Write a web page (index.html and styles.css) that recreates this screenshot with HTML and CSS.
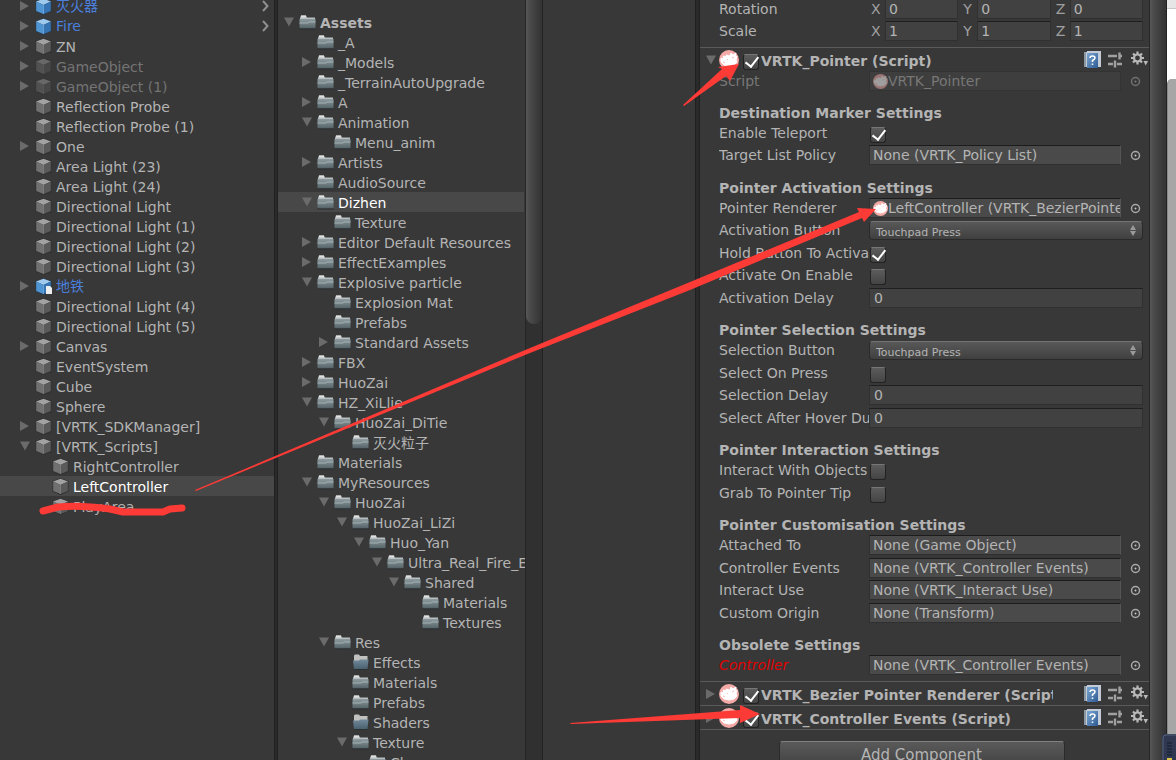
FILE: index.html
```html
<!DOCTYPE html>
<html lang="en">
<head>
  <meta charset="UTF-8">
  <title>Scene editor</title>
  <link rel="stylesheet" href="styles.css">
</head>
<body>
  <!-- shared icons -->
  <svg class="sprite" aria-hidden="true">
    <defs>
      <linearGradient id="folderFill" x1="0" y1="0" x2="0" y2="1">
        <stop offset="0" stop-color="#8f9c9f"/><stop offset="1" stop-color="#536267"/>
      </linearGradient>
      <linearGradient id="openFill" x1="0" y1="0" x2="0" y2="1">
        <stop offset="0" stop-color="#71899a"/><stop offset="1" stop-color="#4a6170"/>
      </linearGradient>
      <linearGradient id="bookFill" x1="0" y1="0" x2="1" y2="1">
        <stop offset="0" stop-color="#7ba6d2"/><stop offset="1" stop-color="#2d5a94"/>
      </linearGradient>
    </defs>
    <symbol id="right" viewBox="0 0 10 10"><path d="M0 0L9 5L0 10Z" fill="#6b6b6b"/></symbol>
    <symbol id="down" viewBox="0 0 10 10"><path d="M0 0.500H10L5 9.500Z" fill="#6b6b6b"/></symbol>
    <symbol id="cube" viewBox="0 0 17 17">
      <path d="M8.500 0L16.500 3V13.500L8.500 17L0.500 13.500V3Z" fill="#303030"/>
      <path d="M8.500 0.800L16 3.500L8.500 7L1 3.500Z" fill="#a2a2a2"/>
      <path d="M1.200 3.500L8.500 7V16L1.200 13Z" fill="#707070"/>
      <path d="M15.800 3.500L8.500 7V16L15.800 13Z" fill="#5a5a5a"/>
      <path d="M8.500 7V16" stroke="#858585" stroke-width="0.800"/>
    </symbol>
    <symbol id="prefab" viewBox="0 0 17 17">
      <path d="M8.500 0L16.500 3V13.500L8.500 17L0.500 13.500V3Z" fill="#2b3a49"/>
      <path d="M8.500 0.800L16 3.500L8.500 7L1 3.500Z" fill="#9fcaee"/>
      <path d="M1.200 3.500L8.500 7V16L1.200 13Z" fill="#5095d3"/>
      <path d="M15.800 3.500L8.500 7V16L15.800 13Z" fill="#3573b3"/>
      <path d="M8.500 7V16" stroke="#74b0e2" stroke-width="0.800"/>
    </symbol>
    <symbol id="model" viewBox="0 0 17 17">
      <use href="#prefab"/>
      <path d="M11 8H15L17 10V16H11Z" fill="#eee"/>
    </symbol>
    <symbol id="folder" viewBox="0 0 17 16">
      <path d="M1 3.500L2 1H7L8 3H16V5H1Z" fill="#b9bfc0"/>
      <path d="M2 1H7V3H2Z" fill="#e0e0e0"/>
      <path d="M0.500 4.500H16.500V14H0.500Z" fill="url(#folderFill)"/>
      <path d="M0.500 8.500H9L10 7.500H16.500" stroke="#a4b2b4" fill="none"/>
      <path d="M0 14.500H17" stroke="#2a2f30"/>
    </symbol>
    <symbol id="open" viewBox="0 0 17 16">
      <path d="M2 1L3 0H7L8 1.500H15.500V8H2Z" fill="#c1c1bf"/>
      <path d="M1 6H7L8 5H16.500L15.500 14.500H2Z" fill="url(#openFill)"/>
      <path d="M2 15H15.500" stroke="#2a2f30"/>
    </symbol>
    <symbol id="script" viewBox="0 0 20 20">
      <circle cx="10" cy="10" r="10" fill="#f3aaa7"/>
      <path d="M2 8L5 9L4 6L8 7L7 5L11 6L12 3L14 5L17 3L16 7L18 6L17 10L18 12L15 15L10 16L5 15L2 12Z" fill="#fff" stroke="#fff" stroke-linejoin="round"/>
      <path d="M4 12L6 13M13 8L15 7M8 9L9 10" stroke="#f5bdbb" fill="none"/>
    </symbol>
    <symbol id="book" viewBox="0 0 17 17">
      <path d="M0 1H3V16H0Z" fill="#c5ccd3"/>
      <path d="M1 1V16" stroke="#556577"/>
      <path d="M3 0H17V16H3Z" fill="#c3ccd6"/>
      <path d="M3 2H14V17H3Z" fill="url(#bookFill)"/>
      <path d="M6 7Q6 5 8.500 5T11 7Q11 8 8.500 9.500V11M8.500 12.500V14" stroke="#fff" stroke-width="1.500" fill="none"/>
    </symbol>
    <symbol id="sliders" viewBox="0 0 14 16">
      <path d="M0 4H9M0 12H5M9 12H14M11.500 0.500V7.500M7 8.500V15.500M11 4H14" stroke="#a0a0a0" stroke-width="2.400" fill="none"/>
    </symbol>
    <symbol id="gear" viewBox="0 0 17 17">
      <circle cx="6.500" cy="7" r="3.500" stroke="#b9b9b9" stroke-width="2.200" fill="none"/>
      <path d="M6.500 0.500V3M6.500 11V13.500M0 7H2.500M10.500 7H13M2 2.500L4 4.500M9 9.500L11 11.500M11 2.500L9 4.500M4 9.500L2 11.500" stroke="#b9b9b9" stroke-width="2.200"/>
      <path d="M12.500 10H17L14.700 14.500Z" fill="#b9b9b9"/>
    </symbol>
    <symbol id="target" viewBox="0 0 11 11">
      <circle cx="5.500" cy="5.500" r="4" stroke="#a8a8a8" stroke-width="1.500" fill="none"/>
      <circle cx="5.500" cy="5.500" r="1" fill="#c4c4c4"/>
    </symbol>
  </svg>

  <main class="editor">
    <section class="panel hierarchy">
      <ul class="tree">
        <li class="item prefab"><i><svg><use href="#right"/></svg></i><svg class="icon"><use href="#prefab"/></svg><span>灭火器</span><svg class="enter" viewBox="0 0 7 12"><path d="M1 1L5.500 6L1 11"/></svg></li>
        <li class="item prefab"><i><svg><use href="#right"/></svg></i><svg class="icon"><use href="#prefab"/></svg><span>Fire</span><svg class="enter" viewBox="0 0 7 12"><path d="M1 1L5.500 6L1 11"/></svg></li>
        <li class="item"><i><svg><use href="#right"/></svg></i><svg class="icon"><use href="#cube"/></svg><span>ZN</span></li>
        <li class="item inactive"><i><svg><use href="#right"/></svg></i><svg class="icon"><use href="#cube"/></svg><span>GameObject</span></li>
        <li class="item inactive"><i><svg><use href="#right"/></svg></i><svg class="icon"><use href="#cube"/></svg><span>GameObject (1)</span></li>
        <li class="item"><i></i><svg class="icon"><use href="#cube"/></svg><span>Reflection Probe</span></li>
        <li class="item"><i></i><svg class="icon"><use href="#cube"/></svg><span>Reflection Probe (1)</span></li>
        <li class="item"><i><svg><use href="#right"/></svg></i><svg class="icon"><use href="#cube"/></svg><span>One</span></li>
        <li class="item"><i></i><svg class="icon"><use href="#cube"/></svg><span>Area Light (23)</span></li>
        <li class="item"><i></i><svg class="icon"><use href="#cube"/></svg><span>Area Light (24)</span></li>
        <li class="item"><i></i><svg class="icon"><use href="#cube"/></svg><span>Directional Light</span></li>
        <li class="item"><i></i><svg class="icon"><use href="#cube"/></svg><span>Directional Light (1)</span></li>
        <li class="item"><i></i><svg class="icon"><use href="#cube"/></svg><span>Directional Light (2)</span></li>
        <li class="item"><i></i><svg class="icon"><use href="#cube"/></svg><span>Directional Light (3)</span></li>
        <li class="item prefab"><i><svg><use href="#right"/></svg></i><svg class="icon"><use href="#model"/></svg><span>地铁</span></li>
        <li class="item"><i></i><svg class="icon"><use href="#cube"/></svg><span>Directional Light (4)</span></li>
        <li class="item"><i></i><svg class="icon"><use href="#cube"/></svg><span>Directional Light (5)</span></li>
        <li class="item"><i><svg><use href="#right"/></svg></i><svg class="icon"><use href="#cube"/></svg><span>Canvas</span></li>
        <li class="item"><i></i><svg class="icon"><use href="#cube"/></svg><span>EventSystem</span></li>
        <li class="item"><i></i><svg class="icon"><use href="#cube"/></svg><span>Cube</span></li>
        <li class="item"><i></i><svg class="icon"><use href="#cube"/></svg><span>Sphere</span></li>
        <li class="item"><i><svg><use href="#right"/></svg></i><svg class="icon"><use href="#cube"/></svg><span>[VRTK_SDKManager]</span></li>
        <li class="item"><i><svg><use href="#down"/></svg></i><svg class="icon"><use href="#cube"/></svg><span>[VRTK_Scripts]</span></li>
        <li class="item child"><i></i><svg class="icon"><use href="#cube"/></svg><span>RightController</span></li>
        <li class="item child selected"><i></i><svg class="icon"><use href="#cube"/></svg><span>LeftController</span></li>
        <li class="item child"><i></i><svg class="icon"><use href="#cube"/></svg><span>PlayArea</span></li>
      </ul>
    </section>
    <div class="divider"></div>

    <section class="panel project">
      <ul class="tree">
        <li class="item d0"><i><svg><use href="#down"/></svg></i><svg class="icon"><use href="#folder"/></svg><b>Assets</b></li>
        <li class="item d1"><i></i><svg class="icon"><use href="#folder"/></svg><span>_A</span></li>
        <li class="item d1"><i><svg><use href="#right"/></svg></i><svg class="icon"><use href="#folder"/></svg><span>_Models</span></li>
        <li class="item d1"><i></i><svg class="icon"><use href="#folder"/></svg><span>_TerrainAutoUpgrade</span></li>
        <li class="item d1"><i><svg><use href="#right"/></svg></i><svg class="icon"><use href="#folder"/></svg><span>A</span></li>
        <li class="item d1"><i><svg><use href="#down"/></svg></i><svg class="icon"><use href="#folder"/></svg><span>Animation</span></li>
        <li class="item d2"><i></i><svg class="icon"><use href="#folder"/></svg><span>Menu_anim</span></li>
        <li class="item d1"><i><svg><use href="#right"/></svg></i><svg class="icon"><use href="#folder"/></svg><span>Artists</span></li>
        <li class="item d1"><i></i><svg class="icon"><use href="#folder"/></svg><span>AudioSource</span></li>
        <li class="item d1 selected"><i><svg><use href="#down"/></svg></i><svg class="icon"><use href="#folder"/></svg><span>Dizhen</span></li>
        <li class="item d2"><i></i><svg class="icon"><use href="#folder"/></svg><span>Texture</span></li>
        <li class="item d1"><i><svg><use href="#right"/></svg></i><svg class="icon"><use href="#folder"/></svg><span>Editor Default Resources</span></li>
        <li class="item d1"><i><svg><use href="#right"/></svg></i><svg class="icon"><use href="#folder"/></svg><span>EffectExamples</span></li>
        <li class="item d1"><i><svg><use href="#down"/></svg></i><svg class="icon"><use href="#folder"/></svg><span>Explosive particle</span></li>
        <li class="item d2"><i></i><svg class="icon"><use href="#folder"/></svg><span>Explosion Mat</span></li>
        <li class="item d2"><i></i><svg class="icon"><use href="#folder"/></svg><span>Prefabs</span></li>
        <li class="item d2"><i><svg><use href="#right"/></svg></i><svg class="icon"><use href="#folder"/></svg><span>Standard Assets</span></li>
        <li class="item d1"><i><svg><use href="#right"/></svg></i><svg class="icon"><use href="#folder"/></svg><span>FBX</span></li>
        <li class="item d1"><i><svg><use href="#right"/></svg></i><svg class="icon"><use href="#folder"/></svg><span>HuoZai</span></li>
        <li class="item d1"><i><svg><use href="#down"/></svg></i><svg class="icon"><use href="#folder"/></svg><span>HZ_XiLlie</span></li>
        <li class="item d2"><i><svg><use href="#down"/></svg></i><svg class="icon"><use href="#folder"/></svg><span>HuoZai_DiTie</span></li>
        <li class="item d3"><i></i><svg class="icon"><use href="#folder"/></svg><span>灭火粒子</span></li>
        <li class="item d1"><i></i><svg class="icon"><use href="#folder"/></svg><span>Materials</span></li>
        <li class="item d1"><i><svg><use href="#down"/></svg></i><svg class="icon"><use href="#folder"/></svg><span>MyResources</span></li>
        <li class="item d2"><i><svg><use href="#down"/></svg></i><svg class="icon"><use href="#folder"/></svg><span>HuoZai</span></li>
        <li class="item d3"><i><svg><use href="#down"/></svg></i><svg class="icon"><use href="#folder"/></svg><span>HuoZai_LiZi</span></li>
        <li class="item d4"><i><svg><use href="#down"/></svg></i><svg class="icon"><use href="#folder"/></svg><span>Huo_Yan</span></li>
        <li class="item d5"><i><svg><use href="#down"/></svg></i><svg class="icon"><use href="#folder"/></svg><span>Ultra_Real_Fire_Effects</span></li>
        <li class="item d6"><i><svg><use href="#down"/></svg></i><svg class="icon"><use href="#folder"/></svg><span>Shared</span></li>
        <li class="item d7"><i></i><svg class="icon"><use href="#folder"/></svg><span>Materials</span></li>
        <li class="item d7"><i></i><svg class="icon"><use href="#folder"/></svg><span>Textures</span></li>
        <li class="item d2"><i><svg><use href="#down"/></svg></i><svg class="icon"><use href="#folder"/></svg><span>Res</span></li>
        <li class="item d3"><i></i><svg class="icon"><use href="#open"/></svg><span>Effects</span></li>
        <li class="item d3"><i></i><svg class="icon"><use href="#folder"/></svg><span>Materials</span></li>
        <li class="item d3"><i></i><svg class="icon"><use href="#folder"/></svg><span>Prefabs</span></li>
        <li class="item d3"><i></i><svg class="icon"><use href="#open"/></svg><span>Shaders</span></li>
        <li class="item d3"><i><svg><use href="#down"/></svg></i><svg class="icon"><use href="#folder"/></svg><span>Texture</span></li>
        <li class="item d4"><i></i><svg class="icon"><use href="#folder"/></svg><span>Char</span></li>
      </ul>
    </section>
    <div class="scrollbar project-scroll"><div class="thumb"></div></div>
    <section class="panel content"></section>
    <div class="divider"></div>

    <section class="panel inspector">
      <div class="transform">
        <div class="row">
          <span class="label">Rotation</span>
          <div class="vector">
            <label for="rx">X</label><input class="field" id="rx" value="0">
            <label for="ry">Y</label><input class="field" id="ry" value="0">
            <label for="rz">Z</label><input class="field" id="rz" value="0">
          </div>
        </div>
        <div class="row">
          <span class="label">Scale</span>
          <div class="vector">
            <label for="sx">X</label><input class="field" id="sx" value="1">
            <label for="sy">Y</label><input class="field" id="sy" value="1">
            <label for="sz">Z</label><input class="field" id="sz" value="1">
          </div>
        </div>
      </div>

      <article class="component">
        <header class="component-head">
          <svg class="fold"><use href="#down"/></svg>
          <svg class="script-icon"><use href="#script"/></svg>
          <input type="checkbox" id="pointer" checked>
          <label class="title" for="pointer">VRTK_Pointer (Script)</label>
          <svg class="book"><use href="#book"/></svg><svg class="sliders"><use href="#sliders"/></svg><svg class="gear"><use href="#gear"/></svg>
        </header>

        <div class="group">
          <div class="row disabled">
            <label class="label" for="script-ref">Script</label>
            <div class="object"><svg><use href="#script"/></svg><input id="script-ref" value="VRTK_Pointer" disabled></div>
            <button class="pick" aria-label="Pick script" disabled><svg><use href="#target"/></svg></button>
          </div>
        </div>

        <div class="group late">
          <h3>Destination Marker Settings</h3>
          <div class="row"><label class="label" for="teleport">Enable Teleport</label><input type="checkbox" id="teleport" checked></div>
          <div class="row">
            <label class="label" for="policy">Target List Policy</label>
            <div class="object"><input id="policy" value="None (VRTK_Policy List)" readonly></div>
            <button class="pick" aria-label="Pick policy list"><svg><use href="#target"/></svg></button>
          </div>
        </div>

        <div class="group late">
          <h3>Pointer Activation Settings</h3>
          <div class="row">
            <label class="label" for="renderer">Pointer Renderer</label>
            <div class="object"><svg><use href="#script"/></svg><input id="renderer" value="LeftController (VRTK_BezierPointerRenderer)" readonly></div>
            <button class="pick" aria-label="Pick renderer"><svg><use href="#target"/></svg></button>
          </div>
          <div class="row">
            <label class="label" for="act-button">Activation Button</label>
            <div class="dropdown"><select id="act-button"><option>Touchpad Press</option></select><svg viewBox="0 0 6 11"><path d="M3 0L6 5H0ZM0 6H6L3 11Z"/></svg></div>
          </div>
          <div class="row"><label class="label" for="hold">Hold Button To Activate</label><input type="checkbox" id="hold" checked></div>
          <div class="row"><label class="label" for="act-enable">Activate On Enable</label><input type="checkbox" id="act-enable"></div>
          <div class="row"><label class="label" for="act-delay">Activation Delay</label><input class="field" id="act-delay" value="0"></div>
        </div>

        <div class="group">
          <h3>Pointer Selection Settings</h3>
          <div class="row">
            <label class="label" for="sel-button">Selection Button</label>
            <div class="dropdown"><select id="sel-button"><option>Touchpad Press</option></select><svg viewBox="0 0 6 11"><path d="M3 0L6 5H0ZM0 6H6L3 11Z"/></svg></div>
          </div>
          <div class="row"><label class="label" for="sel-press">Select On Press</label><input type="checkbox" id="sel-press"></div>
          <div class="row"><label class="label" for="sel-delay">Selection Delay</label><input class="field" id="sel-delay" value="0"></div>
          <div class="row"><label class="label" for="sel-hover">Select After Hover Duration</label><input class="field" id="sel-hover" value="0"></div>
        </div>

        <div class="group">
          <h3>Pointer Interaction Settings</h3>
          <div class="row"><label class="label" for="interact">Interact With Objects</label><input type="checkbox" id="interact"></div>
          <div class="row"><label class="label" for="grab">Grab To Pointer Tip</label><input type="checkbox" id="grab"></div>
        </div>

        <div class="group">
          <h3>Pointer Customisation Settings</h3>
          <div class="row">
            <label class="label" for="attached">Attached To</label>
            <div class="object"><input id="attached" value="None (Game Object)" readonly></div>
            <button class="pick" aria-label="Pick object"><svg><use href="#target"/></svg></button>
          </div>
          <div class="row">
            <label class="label" for="events">Controller Events</label>
            <div class="object"><input id="events" value="None (VRTK_Controller Events)" readonly></div>
            <button class="pick" aria-label="Pick events"><svg><use href="#target"/></svg></button>
          </div>
          <div class="row">
            <label class="label" for="use">Interact Use</label>
            <div class="object"><input id="use" value="None (VRTK_Interact Use)" readonly></div>
            <button class="pick" aria-label="Pick interact use"><svg><use href="#target"/></svg></button>
          </div>
          <div class="row">
            <label class="label" for="origin">Custom Origin</label>
            <div class="object"><input id="origin" value="None (Transform)" readonly></div>
            <button class="pick" aria-label="Pick origin"><svg><use href="#target"/></svg></button>
          </div>
        </div>

        <div class="group">
          <h3>Obsolete Settings</h3>
          <div class="row">
            <label class="label obsolete" for="controller">Controller</label>
            <div class="object"><input id="controller" value="None (VRTK_Controller Events)" readonly></div>
            <button class="pick" aria-label="Pick controller"><svg><use href="#target"/></svg></button>
          </div>
        </div>
      </article>

      <article class="component">
        <header class="component-head">
          <svg class="fold"><use href="#right"/></svg>
          <svg class="script-icon"><use href="#script"/></svg>
          <input type="checkbox" id="bezier" checked>
          <label class="title" for="bezier">VRTK_Bezier Pointer Renderer (Script)</label>
          <svg class="book"><use href="#book"/></svg><svg class="sliders"><use href="#sliders"/></svg><svg class="gear"><use href="#gear"/></svg>
        </header>
      </article>
      <article class="component last">
        <header class="component-head">
          <svg class="fold"><use href="#right"/></svg>
          <svg class="script-icon"><use href="#script"/></svg>
          <input type="checkbox" id="ctrl-events" checked>
          <label class="title" for="ctrl-events">VRTK_Controller Events (Script)</label>
          <svg class="book"><use href="#book"/></svg><svg class="sliders"><use href="#sliders"/></svg><svg class="gear"><use href="#gear"/></svg>
        </header>
      </article>
      <footer class="add-row"><button class="add">Add Component</button></footer>
    </section>
    <div class="scrollbar"><div class="thumb full"></div></div>
    <div class="page-scroll"><div class="page-thumb"></div></div>
  </main>

  <!-- hand-drawn notes -->
  <svg class="notes" viewBox="0 0 1176 760">
    <path d="M683 105L722 69L718 67L739 64L730 81L726 76L684 106Z"/>
    <path d="M195 490L530 348L690 282L859 212L857 208L876 209L864 222L862 218L690 290L530 353L196 491Z"/>
    <path d="M570 723L740 710V705L760 714L740 723V718L571 724Z"/>
    <path class="stroke" d="M43 511L58 507Q80 505 110 509L123 512H163L170 509L182 508"/>
  </svg>
  <svg class="widget" viewBox="0 0 14 26">
    <path d="M0 26V3Q0 0 3 0H14V26Z" fill="#2f3850"/>
    <path d="M1 26V4Q1 1 4 1H14" stroke="#566078" fill="none"/>
    <path d="M5 9H10M5 12H10M5 15H10M5 18H10M5 21H10" stroke="#151a28"/>
    <path d="M5 25H10" stroke="#e2c64a" stroke-width="2"/>
  </svg>
</body>
</html>
```

FILE: styles.css
```css
* {
  box-sizing: border-box;
}
body {
  margin: 0;
  height: 100vh;
  overflow: hidden;
  position: relative;
  background: #383838;
  color: #b4b4b4;
  font-family: "DejaVu Sans", "Noto Sans CJK SC", sans-serif;
  font-size: 14px;
  line-height: 20px;
}
input, select, button {
  font: inherit;
  color: inherit;
  margin: 0;
  padding: 0;
  border: none;
  background: none;
  border-radius: 0;
}
svg {
  display: block;
  flex: none;
}
.sprite {
  position: absolute;
  width: 0;
  height: 0;
}
.editor {
  display: grid;
  grid-template-columns: 274px 4px 247px 18px 1fr 5px 449px 18px 9px;
  height: 100%;
}
.panel {
  min-width: 0;
  min-height: 0;
  overflow: hidden;
}
.divider {
  background: #2a2a2a;
  border-left: 1px solid #202020;
  border-right: 1px solid #202020;
}

/* trees */
.tree {
  list-style: none;
  margin: 0;
  padding: 0;
}
.hierarchy .tree {
  margin-top: -4px;
}
.project .tree {
  margin-top: 12px;
}
.item {
  display: flex;
  align-items: center;
  height: 20px;
  padding-left: 20px;
  white-space: nowrap;
}
.item i {
  flex: none;
  width: 15px;
}
.item i svg {
  width: 10px;
  height: 10px;
}
.item .icon {
  width: 17px;
  height: 17px;
  margin-right: 4px;
}
.item span, .item b {
  padding-top: 2px;
}
.project .item {
  margin-right: 1px;
}
.prefab {
  color: #4a7fdc;
}
.prefab span {
  padding-top: 0;
}
.inactive {
  color: #747474;
}
.inactive .icon {
  opacity: 0.45;
}
.child {
  padding-left: 37px;
}
.selected {
  background: #484848;
  color: #fff;
}
.enter {
  width: 7px;
  height: 12px;
  margin-left: auto;
  margin-right: 5px;
  fill: none;
  stroke: #8f8f8f;
  stroke-width: 2;
}
.d0 { padding-left: 6px; }
.d1 { padding-left: 24px; }
.d2 { padding-left: 41px; }
.d3 { padding-left: 59px; }
.d4 { padding-left: 76px; }
.d5 { padding-left: 94px; }
.d6 { padding-left: 111px; }
.d7 { padding-left: 129px; }

/* scrollbars */
.scrollbar {
  background: #303030;
  border-left: 1px solid #262626;
  border-right: 1px solid #222;
}
.thumb {
  height: 324px;
  border-radius: 0 0 8px 8px;
  background: linear-gradient(90deg, #585858, #4c4c4c 20%, #353535 90%);
}
.thumb.full {
  height: 100%;
  border-radius: 0;
}
.page-scroll {
  background: linear-gradient(#e6e6e6 8px, #c8c8c8 8px, #c8c8c8 9px, #fff 9px);
  padding-top: 79px;
}
.page-thumb {
  height: 100%;
  background: #a6a6a6;
  border-left: 1px solid #888;
  border-radius: 5px 0 0 0;
}

/* inspector */
.transform {
  margin-top: -1px;
  padding-bottom: 3px;
}
.row {
  display: flex;
  align-items: center;
  height: 20px;
  margin-bottom: 2px;
  padding-left: 19px;
  padding-right: 6px;
}
.row:nth-child(even),
.late .row:nth-child(odd) {
  margin-bottom: 3px;
}
.late .row:nth-child(even) {
  margin-bottom: 2px;
}
.label {
  flex: none;
  width: 150px;
  overflow: hidden;
  white-space: nowrap;
}
.obsolete {
  color: #e00000;
  font-style: italic;
}
.group {
  padding-bottom: 10px;
}
.group:last-child {
  padding-bottom: 3px;
}
h3 {
  margin: 0;
  padding-left: 19px;
  font-size: 14px;
  line-height: 20px;
}
.field {
  flex: 1;
  width: 0;
  min-width: 0;
  height: 20px;
  padding: 0 4px;
  background: #414141;
  border: 1px solid #303030;
  border-top-color: #1f1f1f;
}
.vector {
  display: flex;
  flex: 1;
  min-width: 0;
}
.vector label {
  width: 16px;
  padding-left: 2px;
  color: #a0a0a0;
}
.vector .field + label {
  width: 19px;
  padding-left: 5px;
}
.vector .field {
  padding: 0 3px;
}
.object {
  display: flex;
  align-items: center;
  flex: 1;
  min-width: 0;
  height: 20px;
  padding-left: 3px;
  background: #4a4a4a;
  border: 1px solid #303030;
  border-top-color: #1c1c1c;
  border-right-color: #555;
}
.object svg {
  width: 15px;
  height: 15px;
}
.object input {
  flex: 1;
  min-width: 0;
  width: 0;
  height: 18px;
}
.pick {
  width: 11px;
  height: 11px;
  margin-left: 9px;
  margin-right: 2px;
}
.pick svg {
  width: 11px;
  height: 11px;
}
.disabled {
  color: #777;
}
.disabled svg {
  opacity: 0.5;
}
.disabled .object {
  background: #3e3e3e;
  border-color: #333;
}
input[type="checkbox"] {
  appearance: none;
  position: relative;
  flex: none;
  width: 16px;
  height: 16px;
  margin-left: 1px;
  margin-top: 4px;
  border-radius: 3px;
  border: 1px solid #222;
  border-top-color: #777;
  background: linear-gradient(#5c5c5c, #444);
}
input[type="checkbox"]:checked::after {
  content: "";
  position: absolute;
  left: 4px;
  top: -1px;
  width: 6px;
  height: 11px;
  border: solid #fff;
  border-width: 0 2px 2px 0;
  transform: rotate(38deg);
}
.dropdown {
  position: relative;
  flex: 1;
  height: 19px;
}
.dropdown select {
  appearance: none;
  display: block;
  width: 100%;
  height: 19px;
  padding: 1px 6px 0;
  border: 1px solid #2a2a2a;
  border-top-color: #747474;
  border-radius: 4px;
  background: linear-gradient(#585858, #404040);
  font-size: 11px;
}
.dropdown svg {
  position: absolute;
  right: 7px;
  top: 4px;
  width: 6px;
  height: 11px;
  fill: #9a9a9a;
}
.component {
  border-top: 1px solid #5a5a5a;
}
.component.last {
  border-bottom: 1px solid #5a5a5a;
}
.component-head {
  display: flex;
  align-items: center;
  height: 23px;
  padding-left: 6px;
  padding-right: 1px;
}
.fold {
  width: 10px;
  height: 10px;
  margin-right: 3px;
}
.script-icon {
  width: 20px;
  height: 20px;
  margin-right: 3px;
}
.title {
  flex: 1;
  min-width: 0;
  margin-left: 2px;
  margin-right: 31px;
  padding-top: 3px;
  font-weight: bold;
  overflow: hidden;
  white-space: nowrap;
}
.book {
  width: 17px;
  height: 17px;
  margin-right: 7px;
}
.sliders {
  width: 14px;
  height: 16px;
  margin-right: 9px;
}
.gear {
  width: 17px;
  height: 17px;
}
.add-row {
  display: flex;
  justify-content: center;
  padding: 11px 6px 0 0;
}
.add {
  width: 286px;
  height: 28px;
  border: 1px solid #2a2a2a;
  border-top-color: #808080;
  border-radius: 4px;
  background: linear-gradient(#5a5a5a, #404040);
  font-size: 15px;
}

/* overlays */
.notes {
  position: absolute;
  left: 0;
  top: 0;
  width: 1176px;
  height: 760px;
  fill: #fc3a36;
  pointer-events: none;
}
.notes .stroke {
  fill: none;
  stroke: #fc3a36;
  stroke-width: 7;
  stroke-linecap: round;
  stroke-linejoin: round;
}
.widget {
  position: absolute;
  right: 0;
  bottom: 0;
  width: 14px;
  height: 26px;
}
```
